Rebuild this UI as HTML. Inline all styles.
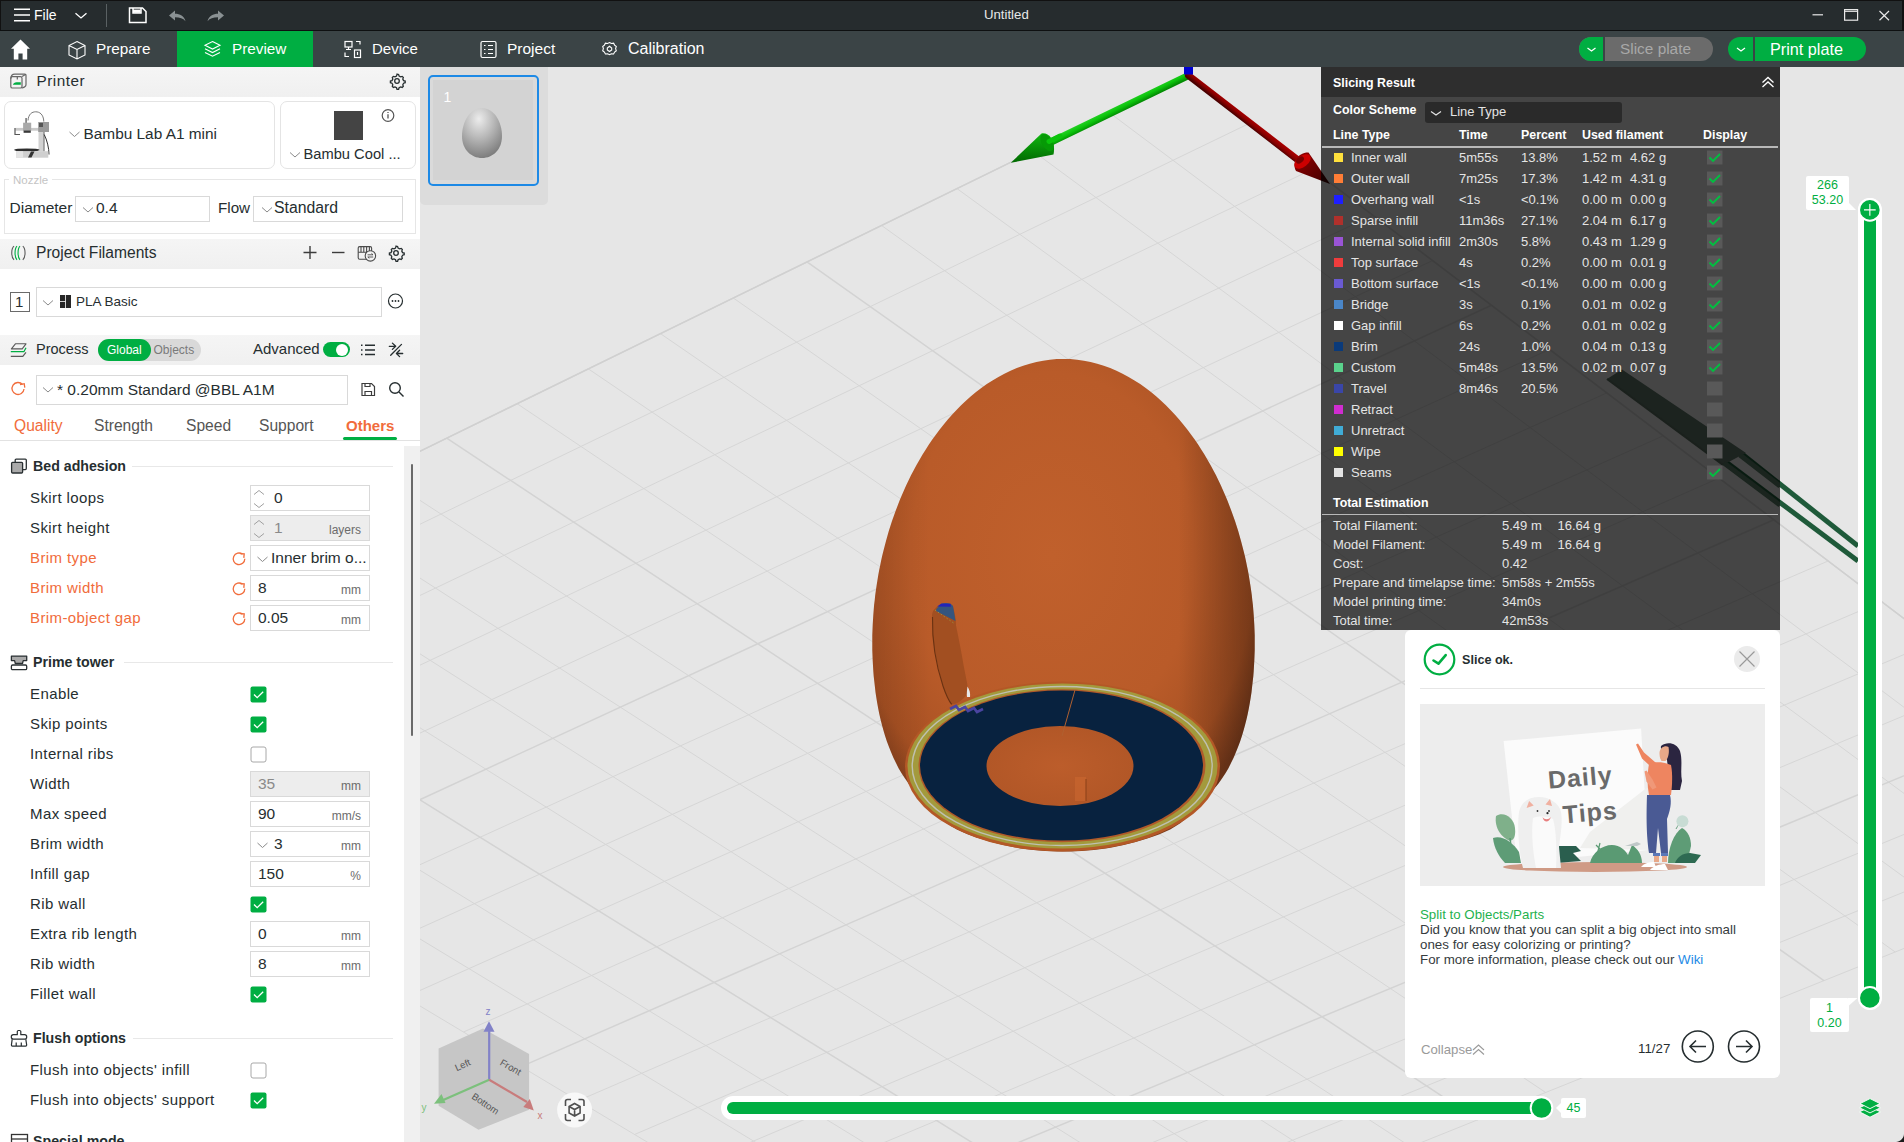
<!DOCTYPE html>
<html><head><meta charset="utf-8">
<style>
*{box-sizing:border-box;margin:0;padding:0}
html,body{width:1904px;height:1142px;overflow:hidden;background:#e6e6e6;font-family:"Liberation Sans",sans-serif;color:#262e30}
.a{position:absolute}
.t{position:absolute;white-space:nowrap;line-height:20px;height:20px}
#title{left:0;top:0;width:1904px;height:31px;background:#262c2e;border-top:1px solid #111;border-left:1px solid #111;border-right:2px solid #111;border-bottom:1px solid #0e1011}
#nav{left:0;top:31px;width:1904px;height:36px;background:#3b4446}
#left{left:0;top:67px;width:420px;height:1075px;background:#fff;overflow:hidden}
.hdr{position:absolute;left:0;width:404px;height:30px;background:linear-gradient(#f5f5f5,#f0f0f0)}
.inp{position:absolute;border:1px solid #d9d9d9;background:#fff}
.dis{background:#ededed}
.lbl{position:absolute;left:30px;font-size:15px;letter-spacing:0.4px;line-height:20px;height:20px;white-space:nowrap;color:#262e30}
.org{color:#f16c3b}
.unit{position:absolute;font-size:12px;color:#6b6b6b;line-height:14px}
.cb{position:absolute;left:250px;width:17px;height:17px;border-radius:2px;background:#00ae42}
.cbo{position:absolute;left:250px;width:17px;height:17px;border-radius:2px;border:1px solid #a6a6a6;background:#fff}
.sec{position:absolute;left:33px;font-size:14.2px;font-weight:bold;line-height:20px;height:20px;white-space:nowrap;color:#262e30}
.secl{position:absolute;height:1px;background:#e8e8e8}
</style></head><body>
<div id="title" class="a"></div>
<svg class="a" style="left:0;top:0" width="240" height="31">
 <g stroke="#fff" stroke-width="1.6"><path d="M14 9.2h16M14 15h16M14 20.8h16"/></g>
 <path d="M75.5 13.2l5.5 4.8 5.5-4.8" fill="none" stroke="#fff" stroke-width="1.3"/>
 <path d="M106.5 4v23" stroke="#5a6163" stroke-width="1"/>
 <g fill="none" stroke="#fff" stroke-width="1.5"><path d="M129.5 8h13l3.5 3.5v11h-16.5z"/><path d="M133 8v5h8V8"/></g>
 <path d="M133 9.6v3.2h7.6V9.6" fill="#fff"/>
 <path d="M169 15.5l6-5v3.2c5 0 9 2 10.5 7.5-2.5-3-5.5-4-10.5-4v3.3z" fill="#8a9193"/>
 <path d="M224 15.5l-6-5v3.2c-5 0-9 2-10.5 7.5 2.5-3 5.5-4 10.5-4v3.3z" fill="#8a9193"/>
</svg>
<div class="t" style="left:34px;top:5px;font-size:14px;color:#fff">File</div>
<div class="t" style="left:984px;top:5px;font-size:13.2px;color:#e8e8e8">Untitled</div>
<svg class="a" style="left:1800px;top:0" width="104" height="31">
 <g stroke="#e8e8e8" stroke-width="1.2" fill="none">
 <path d="M12.5 14.8h10.5"/><rect x="44.6" y="9.6" width="13" height="10.6"/><path d="M44.6 11.3h13"/>
 <path d="M79.5 11l9.5 9.2M89 11l-9.5 9.2"/></g>
</svg>
<div id="nav" class="a"></div>
<div class="a" style="left:177px;top:31px;width:136px;height:36px;background:#00ae42"></div>
<svg class="a" style="left:0;top:31px" width="720" height="36">
 <path d="M20.5 8.5l-9.5 9.2h2.8v10.8h4.6v-6h4.2v6h4.6V17.7h2.8z" fill="#fff"/>
 <g fill="none" stroke="#fff" stroke-width="1.1">
  <path d="M77 10.5l8 4v9.5l-8 4-8-4v-9.5z M69 14.5l8 4 8-4 M77 18.5v9.5"/>
 </g>
 <g fill="none" stroke="#fff" stroke-width="1.1">
  <path d="M212.5 10.5l7.5 3.8-7.5 3.8-7.5-3.8z"/><path d="M205 17.8l7.5 3.8 7.5-3.8"/><path d="M205 21.4l7.5 3.8 7.5-3.8"/>
 </g>
 <g fill="none" stroke="#fff" stroke-width="1.2">
  <rect x="345" y="10.5" width="7" height="5.5"/><path d="M348.5 16v2.5M346 18.5h5"/>
  <path d="M356 10.5h4v3M345 21.5v4h4"/><rect x="354.5" y="19" width="6" height="7.5"/><path d="M357.5 21v3"/>
 </g>
 <g fill="none" stroke="#fff" stroke-width="1.2">
  <rect x="481" y="10.5" width="15" height="16" rx="1.5"/><path d="M484 14.5h1.5M488 14.5h5M484 18.5h1.5M488 18.5h5M484 22.5h1.5M488 22.5h5"/>
 </g>
 <g fill="none" stroke="#fff" stroke-width="1.1">
  <path d="M609.5 11.5l1.9 1 2.2-.3 1 1.9 1.7 1.4-.7 2.1.7 2.1-1.7 1.4-1 1.9-2.2-.3-1.9 1-1.9-1-2.2.3-1-1.9-1.7-1.4.7-2.1-.7-2.1 1.7-1.4 1-1.9 2.2.3z"/>
  <path d="M609.5 15.3l2.2 1.8v1.9l-2.2 1.5-2.2-1.5v-1.9z"/>
 </g>
</svg>
<div class="t" style="left:96px;top:39px;font-size:15.3px;color:#fff">Prepare</div>
<div class="t" style="left:232px;top:39px;font-size:15.3px;color:#fff">Preview</div>
<div class="t" style="left:372px;top:39px;font-size:15px;color:#fff">Device</div>
<div class="t" style="left:507px;top:39px;font-size:15.5px;color:#fff">Project</div>
<div class="t" style="left:628px;top:39px;font-size:16px;color:#fff">Calibration</div>
<div class="a" style="left:1579px;top:37px;width:134px;height:24px;border-radius:12px;background:#6b6b6b;overflow:hidden">
 <div class="a" style="left:0;top:0;width:24px;height:24px;background:#00ae42"></div>
 <div class="a" style="left:24px;top:0;width:2px;height:24px;background:#3b4446"></div>
</div>
<div class="a" style="left:1728px;top:37px;width:138px;height:24px;border-radius:12px;background:#00ae42;overflow:hidden">
 <div class="a" style="left:25px;top:0;width:2px;height:24px;background:#3b4446"></div>
</div>
<svg class="a" style="left:1579px;top:37px" width="300" height="24">
 <path d="M8.5 11l4 3 4-3" fill="none" stroke="#fff" stroke-width="1.3"/>
 <path d="M158 11l4 3 4-3" fill="none" stroke="#fff" stroke-width="1.3"/>
</svg>
<div class="t" style="left:1620px;top:39px;font-size:15.4px;color:#a8a8a8">Slice plate</div>
<div class="t" style="left:1770px;top:39px;font-size:16.2px;color:#fff">Print plate</div>
<div id="left" class="a"></div>
<!-- printer header -->
<div class="hdr" style="top:67px;width:420px"></div>
<svg class="a" style="left:0;top:67px" width="420" height="30">
 <g fill="none" stroke="#666" stroke-width="1.2"><rect x="10.8" y="9.6" width="11.2" height="11.4" rx="1.6"/><path d="M10.8 11.8C10.9 8.6 12.4 7.1 14.8 7.1H24.6A1.4 1.4 0 0 1 26 8.5V17.6C26 19.2 24.8 20.4 22 21"/><path d="M22 9.6L26 7.3"/><path d="M17.3 9.6v3"/></g>
 <path d="M12.9 17.8C13.3 16.2 14.8 15.3 16.5 15.3H20.8V17.8Z" fill="#00ae42"/>
 <g fill="none" stroke="#262e30" stroke-width="1.3"><circle cx="397" cy="14" r="2.3"/>
 <path d="M397 7.2l1.6.3.5 1.6 1.5.8 1.6-.5 1.1 1.1-.5 1.6.8 1.5 1.6.5v1.6l-1.6.5-.8 1.5.5 1.6-1.1 1.1-1.6-.5-1.5.8-.5 1.6h-1.6l-.5-1.6-1.5-.8-1.6.5-1.1-1.1.5-1.6-.8-1.5-1.6-.5v-1.6l1.6-.5.8-1.5-.5-1.6 1.1-1.1 1.6.5 1.5-.8.5-1.6z"/></g>
</svg>
<div class="t" style="left:36.5px;top:71px;font-size:15.3px;letter-spacing:0.5px">Printer</div>
<!-- printer cards -->
<div class="a" style="left:4px;top:101px;width:271px;height:68px;border:1px solid #e4e4e4;border-radius:7px;background:#fff"></div>
<div class="a" style="left:280px;top:101px;width:136px;height:68px;border:1px solid #e4e4e4;border-radius:7px;background:#fff"></div>
<svg class="a" style="left:0;top:100px" width="420" height="70">
 <!-- printer image -->
 <path d="M28 20.5C28.5 14 32 11.8 35.7 11.8S43.5 14 43.8 21.6" fill="none" stroke="#6a6a6a" stroke-width="0.9"/>
 <rect x="25.2" y="18" width="1.8" height="5" fill="#888"/>
 <rect x="15.4" y="27.9" width="23.8" height="2.8" fill="#c9c9c9"/>
 <path d="M15 28v6.5h5" fill="none" stroke="#555" stroke-width="1.2"/>
 <rect x="23.1" y="22.7" width="8.1" height="8" fill="#a9a9a9"/>
 <rect x="23.6" y="30.5" width="7.2" height="2.3" fill="#3a3a3a"/>
 <rect x="38.2" y="22" width="10.8" height="10" fill="#9a9a9a"/>
 <rect x="39" y="23" width="4" height="4" fill="#555"/>
 <rect x="38.5" y="32" width="6" height="19.5" fill="#d2d2d2"/>
 <rect x="43.3" y="32" width="1.3" height="19.5" fill="#888"/>
 <path d="M44.2 34.5C47 40 49 48 49 54.5" fill="none" stroke="#333" stroke-width="1"/>
 <ellipse cx="26.8" cy="50" rx="12.6" ry="1.6" fill="#2e2e2e"/>
 <rect x="16.1" y="51.2" width="32.2" height="6.5" fill="#cfcfcf"/>
 <rect x="16.1" y="51.2" width="7" height="6.5" fill="#e4e4e4"/>
 <path d="M28 57.5l3-6h3.5l-3 6z" fill="#333"/>
 <path d="M69.5 32l5 4.5 5-4.5" fill="none" stroke="#8a8a8a" stroke-width="1"/>
 <!-- plate -->
 <rect x="334" y="11" width="29" height="29" fill="#444"/>
 <circle cx="388" cy="15.5" r="5.8" fill="none" stroke="#555" stroke-width="1.2"/>
 <path d="M388 14.3v4.2M388 11.9v1" stroke="#555" stroke-width="1.3"/>
 <path d="M290 52.5l5 4.5 5-4.5" fill="none" stroke="#8a8a8a" stroke-width="1"/>
</svg>
<div class="t" style="left:83.5px;top:124px;font-size:15.4px">Bambu Lab A1 mini</div>
<div class="t" style="left:303.5px;top:144px;font-size:14.7px">Bambu Cool ...</div>
<!-- nozzle -->
<div class="a" style="left:4px;top:179px;width:412px;height:55px;border:1px solid #e6e6e6"></div>
<div class="t" style="left:9px;top:170px;padding:0 4px;background:#fff;font-size:11.5px;color:#c4c4c4">Nozzle</div>
<div class="t" style="left:9.5px;top:198px;font-size:15.5px">Diameter</div>
<div class="inp" style="left:75px;top:196px;width:135px;height:26px"></div>
<div class="t" style="left:218px;top:198px;font-size:15.2px">Flow</div>
<div class="inp" style="left:253px;top:196px;width:150px;height:26px"></div>
<svg class="a" style="left:0;top:196px" width="420" height="26">
 <path d="M83 11.5l5 4.5 5-4.5M262 11.5l5 4.5 5-4.5" fill="none" stroke="#8a8a8a" stroke-width="1"/>
</svg>
<div class="t" style="left:96px;top:198px;font-size:15.5px">0.4</div>
<div class="t" style="left:274px;top:198px;font-size:15.8px">Standard</div>
<!-- project filaments -->
<div class="hdr" style="top:239px;width:420px"></div>
<svg class="a" style="left:0;top:239px" width="420" height="30">
 <g fill="none" stroke="#5a5a5a" stroke-width="1.1"><path d="M14 7.2c-3 2.5-3 11 0 13.6"/><path d="M22.8 7.2c3 2.5 3 11 0 13.6"/></g>
 <path d="M17 7.2c-2.6 2.5-2.6 11 0 13.6M20 7.2c-2.6 2.5-2.6 11 0 13.6" fill="none" stroke="#00ae42" stroke-width="1.1"/>
 <g stroke="#3c3c3c" stroke-width="1.4"><path d="M303.5 13.5h13M310 7v13"/><path d="M332 13.5h12.5"/></g>
 <g fill="none" stroke="#4a4a4a" stroke-width="1.1"><rect x="358.2" y="7.6" width="13.4" height="12.6" rx="1.5"/><path d="M358.2 13.3h13.4M361 7.6v5.7M363.8 7.6v5.7M366.6 7.6v5.7M369.4 7.6v5.7"/></g>
 <circle cx="370.4" cy="16.9" r="5.2" fill="#f3f3f3" stroke="#4a4a4a" stroke-width="1.1"/>
 <path d="M367.6 15.8h5.4l-1.5-1.4M373.2 18h-5.4l1.5 1.4" fill="none" stroke="#4a4a4a" stroke-width="0.9"/>
 <g fill="none" stroke="#262e30" stroke-width="1.3"><circle cx="396" cy="14" r="2.3"/>
 <path d="M396 7.2l1.6.3.5 1.6 1.5.8 1.6-.5 1.1 1.1-.5 1.6.8 1.5 1.6.5v1.6l-1.6.5-.8 1.5.5 1.6-1.1 1.1-1.6-.5-1.5.8-.5 1.6h-1.6l-.5-1.6-1.5-.8-1.6.5-1.1-1.1.5-1.6-.8-1.5-1.6-.5v-1.6l1.6-.5.8-1.5-.5-1.6 1.1-1.1 1.6.5 1.5-.8.5-1.6z"/></g>
</svg>
<div class="t" style="left:36px;top:243px;font-size:15.6px">Project Filaments</div>
<div class="a" style="left:10px;top:292px;width:20px;height:20px;border:1px solid #6a6a6a"></div>
<div class="t" style="left:15px;top:292px;font-size:15px">1</div>
<div class="inp" style="left:36px;top:287px;width:346px;height:30px"></div>
<svg class="a" style="left:0;top:287px" width="420" height="30">
 <path d="M43 13.5l5 4.5 5-4.5" fill="none" stroke="#8a8a8a" stroke-width="1"/>
 <rect x="60" y="8" width="11" height="13" fill="#262626"/>
 <path d="M65.5 8v13M60 14.5h5.5" stroke="#fff" stroke-width="0.8"/>
 <circle cx="395.5" cy="14" r="7" fill="none" stroke="#262e30" stroke-width="1.2"/>
 <g fill="#262e30"><circle cx="392.5" cy="14" r="0.9"/><circle cx="395.5" cy="14" r="0.9"/><circle cx="398.5" cy="14" r="0.9"/></g>
</svg>
<div class="t" style="left:76px;top:292px;font-size:13.5px">PLA Basic</div>
<!-- process -->
<div class="hdr" style="top:335px;width:420px"></div>
<svg class="a" style="left:0;top:335px" width="420" height="30">
 <path d="M15.4 8.8H26l-3.8 5.1H11.4z" fill="none" stroke="#5a5a5a" stroke-width="1.1" stroke-linejoin="round"/>
 <path d="M10.8 16.7h13.1l2.1-4" fill="none" stroke="#00ae42" stroke-width="1.3"/>
 <path d="M10.8 21.3h12l3.2-4" fill="none" stroke="#5a5a5a" stroke-width="1.2"/>
 <g stroke="#262e30" stroke-width="1.4"><path d="M365 10.2h10M365 15h10M365 19.5h10"/><path d="M361 10.2h1.5M361 15h1.5M361 19.5h1.5"/></g>
 <g fill="none" stroke="#262e30" stroke-width="1.3" stroke-linecap="round" stroke-linejoin="round"><path d="M401.5 9.4L390.7 20.2"/><path d="M389.3 11.3h6.4M392.4 8.1l3.3 3.2-3.3 3.1"/><path d="M402.7 18.5h-6.3M399.6 15.3l-3.2 3.2 3.2 3.1"/></g>
</svg>
<div class="t" style="left:36px;top:339px;font-size:14.5px">Process</div>
<div class="a" style="left:98px;top:339px;width:103px;height:22px;border-radius:11px;background:#d9d9d9"></div>
<div class="a" style="left:98px;top:339px;width:53px;height:22px;border-radius:11px;background:#00ae42"></div>
<div class="t" style="left:107px;top:340px;font-size:12px;color:#fff">Global</div>
<div class="t" style="left:153.5px;top:340px;font-size:12px;color:#7a7a7a">Objects</div>
<div class="t" style="left:253px;top:339px;font-size:15px">Advanced</div>
<div class="a" style="left:323px;top:342px;width:27px;height:15px;border-radius:8px;background:#00ae42"></div>
<div class="a" style="left:336px;top:343.5px;width:12px;height:12px;border-radius:6px;background:#fff"></div>
<!-- preset --><div class="inp" style="left:36px;top:375px;width:312px;height:30px"></div>

<svg class="a" style="left:0;top:375px" width="420" height="30">
 <path d="M22.5 9.5a6 6 0 1 0 1.5 4.5" fill="none" stroke="#f16c3b" stroke-width="1.3"/>
 <path d="M20 9.7l4.2-1 .6 4" fill="none" stroke="#f16c3b" stroke-width="1.3"/>
 <path d="M43 12.5l5 4.5 5-4.5" fill="none" stroke="#8a8a8a" stroke-width="1"/>
 <g fill="none" stroke="#3c3c3c" stroke-width="1.2"><path d="M362 8.5h9.5l3 3v9h-12.5z"/><path d="M365 20.5v-4h6.5v4M365 8.5v3h5v-3"/></g>
 <g fill="none" stroke="#262e30" stroke-width="1.4"><circle cx="395" cy="13" r="5.3"/><path d="M399 17l4.5 4.5"/></g>
</svg>
<div class="t" style="left:57px;top:379.5px;font-size:15.5px">* 0.20mm Standard @BBL A1M</div>
<!-- tabs -->
<div class="t" style="left:14px;top:416px;font-size:15.6px;color:#f16c3b">Quality</div>
<div class="t" style="left:94px;top:416px;font-size:15.6px;color:#555">Strength</div>
<div class="t" style="left:186px;top:416px;font-size:15.6px;color:#555">Speed</div>
<div class="t" style="left:259px;top:416px;font-size:15.6px;color:#555">Support</div>
<div class="t" style="left:346px;top:416px;font-size:15px;font-weight:bold;color:#f16c3b">Others</div>
<div class="a" style="left:343px;top:437px;width:54px;height:3px;border-radius:1.5px;background:#00ae42"></div>
<div class="a" style="left:0;top:440px;width:420px;height:1px;background:#e2e2e2"></div>
<!-- scrollbar -->
<div class="a" style="left:404px;top:446px;width:16px;height:696px;background:#f0f0f0"></div>
<div class="a" style="left:410.5px;top:464px;width:2.5px;height:272px;border-radius:1px;background:#6a6a6a"></div>
<div class="sec" style="top:456px">Bed adhesion</div>
<svg class="a" style="left:10px;top:457px" width="20" height="20"><g stroke="#2a3033" stroke-width="1.3" stroke-linejoin="round"><rect x="5.2" y="2.1" width="11.1" height="10.5" rx="1" fill="#fff"/><rect x="1.6" y="5.3" width="11" height="10.7" rx="1" fill="#aaa"/></g></svg>
<div class="secl" style="left:132px;top:466px;width:261px"></div>
<div class="lbl" style="top:487.5px">Skirt loops</div>
<div class="inp" style="left:250px;top:485.0px;width:120px;height:26px"></div>
<svg class="a" style="left:250px;top:485.5px" width="20" height="26"><path d="M4 8.5l5-4 5 4M4 17.5l5 4 5-4" fill="none" stroke="#a0a0a0" stroke-width="1"/></svg>
<div class="t" style="left:274px;top:487.5px;font-size:15.5px;color:#262e30">0</div>
<div class="lbl" style="top:517.5px">Skirt height</div>
<div class="inp dis" style="left:250px;top:515.0px;width:120px;height:26px"></div>
<svg class="a" style="left:250px;top:515.5px" width="20" height="26"><path d="M4 8.5l5-4 5 4M4 17.5l5 4 5-4" fill="none" stroke="#a0a0a0" stroke-width="1"/></svg>
<div class="t" style="left:274px;top:517.5px;font-size:15.5px;color:#8a8a8a">1</div>
<div class="t" style="right:1543px;top:519.5px;font-size:12px;color:#6b6b6b">layers</div>
<div class="lbl org" style="top:547.5px">Brim type</div>
<svg class="a" style="left:230px;top:548.5px" width="18" height="18"><path d="M12.5 5.2a5.8 5.8 0 1 0 2.3 4.6" fill="none" stroke="#f16c3b" stroke-width="1.3"/><path d="M10.2 4.7l4 .2-.4 4" fill="none" stroke="#f16c3b" stroke-width="1.3"/></svg>
<div class="inp" style="left:250px;top:545.0px;width:120px;height:26px"></div>
<svg class="a" style="left:250px;top:545.5px" width="20" height="26"><path d="M7.5 11l5 4.5 5-4.5" fill="none" stroke="#8a8a8a" stroke-width="1"/></svg>
<div class="t" style="left:271px;top:547.5px;font-size:15.5px;color:#262e30">Inner brim o...</div>
<div class="lbl org" style="top:577.5px">Brim width</div>
<svg class="a" style="left:230px;top:578.5px" width="18" height="18"><path d="M12.5 5.2a5.8 5.8 0 1 0 2.3 4.6" fill="none" stroke="#f16c3b" stroke-width="1.3"/><path d="M10.2 4.7l4 .2-.4 4" fill="none" stroke="#f16c3b" stroke-width="1.3"/></svg>
<div class="inp" style="left:250px;top:575.0px;width:120px;height:26px"></div>
<div class="t" style="left:258px;top:577.5px;font-size:15.5px;color:#262e30">8</div>
<div class="t" style="right:1543px;top:579.5px;font-size:12px;color:#6b6b6b">mm</div>
<div class="lbl org" style="top:607.5px">Brim-object gap</div>
<svg class="a" style="left:230px;top:608.5px" width="18" height="18"><path d="M12.5 5.2a5.8 5.8 0 1 0 2.3 4.6" fill="none" stroke="#f16c3b" stroke-width="1.3"/><path d="M10.2 4.7l4 .2-.4 4" fill="none" stroke="#f16c3b" stroke-width="1.3"/></svg>
<div class="inp" style="left:250px;top:605.0px;width:120px;height:26px"></div>
<div class="t" style="left:258px;top:607.5px;font-size:15.5px;color:#262e30">0.05</div>
<div class="t" style="right:1543px;top:609.5px;font-size:12px;color:#6b6b6b">mm</div>
<div class="sec" style="top:651.5px">Prime tower</div>
<svg class="a" style="left:10px;top:652.5px" width="20" height="20"><g stroke="#2a3033" stroke-width="1.3" stroke-linejoin="round"><path d="M1.4 3.1H16.7V7.6H13.2L12.5 10.5H5.3L4.6 7.6H1.4Z" fill="#aaa"/><rect x="1.4" y="12" width="15.3" height="4.6" rx="1.2" fill="#fff"/></g></svg>
<div class="secl" style="left:124px;top:662px;width:269px"></div>
<div class="lbl" style="top:683.5px">Enable</div>
<svg class="a" style="left:250px;top:685.5px" width="17" height="17"><rect x="0.5" y="0.5" width="16" height="16" rx="2" fill="#00ae42"/><path d="M4 8.5l3.2 3.2 6-6" fill="none" stroke="#fff" stroke-width="1.3"/></svg>
<div class="lbl" style="top:713.5px">Skip points</div>
<svg class="a" style="left:250px;top:715.5px" width="17" height="17"><rect x="0.5" y="0.5" width="16" height="16" rx="2" fill="#00ae42"/><path d="M4 8.5l3.2 3.2 6-6" fill="none" stroke="#fff" stroke-width="1.3"/></svg>
<div class="lbl" style="top:743.5px">Internal ribs</div>
<svg class="a" style="left:250px;top:745.5px" width="17" height="17"><rect x="1" y="1" width="15" height="15" rx="2" fill="#fff" stroke="#a8a8a8" stroke-width="1"/></svg>
<div class="lbl" style="top:773.5px">Width</div>
<div class="inp dis" style="left:250px;top:771.0px;width:120px;height:26px"></div>
<div class="t" style="left:258px;top:773.5px;font-size:15.5px;color:#8a8a8a">35</div>
<div class="t" style="right:1543px;top:775.5px;font-size:12px;color:#6b6b6b">mm</div>
<div class="lbl" style="top:803.5px">Max speed</div>
<div class="inp" style="left:250px;top:801.0px;width:120px;height:26px"></div>
<div class="t" style="left:258px;top:803.5px;font-size:15.5px;color:#262e30">90</div>
<div class="t" style="right:1543px;top:805.5px;font-size:12px;color:#6b6b6b">mm/s</div>
<div class="lbl" style="top:833.5px">Brim width</div>
<div class="inp" style="left:250px;top:831.0px;width:120px;height:26px"></div>
<svg class="a" style="left:250px;top:831.5px" width="20" height="26"><path d="M7.5 11l5 4.5 5-4.5" fill="none" stroke="#8a8a8a" stroke-width="1"/></svg>
<div class="t" style="left:274px;top:833.5px;font-size:15.5px;color:#262e30">3</div>
<div class="t" style="right:1543px;top:835.5px;font-size:12px;color:#6b6b6b">mm</div>
<div class="lbl" style="top:863.5px">Infill gap</div>
<div class="inp" style="left:250px;top:861.0px;width:120px;height:26px"></div>
<div class="t" style="left:258px;top:863.5px;font-size:15.5px;color:#262e30">150</div>
<div class="t" style="right:1543px;top:865.5px;font-size:12px;color:#6b6b6b">%</div>
<div class="lbl" style="top:893.5px">Rib wall</div>
<svg class="a" style="left:250px;top:895.5px" width="17" height="17"><rect x="0.5" y="0.5" width="16" height="16" rx="2" fill="#00ae42"/><path d="M4 8.5l3.2 3.2 6-6" fill="none" stroke="#fff" stroke-width="1.3"/></svg>
<div class="lbl" style="top:923.5px">Extra rib length</div>
<div class="inp" style="left:250px;top:921.0px;width:120px;height:26px"></div>
<div class="t" style="left:258px;top:923.5px;font-size:15.5px;color:#262e30">0</div>
<div class="t" style="right:1543px;top:925.5px;font-size:12px;color:#6b6b6b">mm</div>
<div class="lbl" style="top:953.5px">Rib width</div>
<div class="inp" style="left:250px;top:951.0px;width:120px;height:26px"></div>
<div class="t" style="left:258px;top:953.5px;font-size:15.5px;color:#262e30">8</div>
<div class="t" style="right:1543px;top:955.5px;font-size:12px;color:#6b6b6b">mm</div>
<div class="lbl" style="top:983.5px">Fillet wall</div>
<svg class="a" style="left:250px;top:985.5px" width="17" height="17"><rect x="0.5" y="0.5" width="16" height="16" rx="2" fill="#00ae42"/><path d="M4 8.5l3.2 3.2 6-6" fill="none" stroke="#fff" stroke-width="1.3"/></svg>
<div class="sec" style="top:1027.5px">Flush options</div>
<svg class="a" style="left:10px;top:1027.5px" width="20" height="20"><g fill="none" stroke="#2a3033" stroke-width="1.2" stroke-linejoin="round"><path d="M7.3 6.7V3.6A1.1 1.1 0 0 1 8.4 2.5H9.7A1.1 1.1 0 0 1 10.8 3.6V6.7H14.6A2.1 2.1 0 0 1 16.7 8.8V9A2.1 2.1 0 0 1 14.6 11.1H3.4A2.1 2.1 0 0 1 1.3 9V8.8A2.1 2.1 0 0 1 3.4 6.7Z"/><path d="M2.2 11.1L1.4 17.1A1 1 0 0 0 2.4 18.1H15.7A1 1 0 0 0 16.7 17.1L15.8 11.1"/><path d="M6.2 14.4V18M11.3 14.4V18"/></g></svg>
<div class="secl" style="left:133px;top:1038px;width:260px"></div>
<div class="lbl" style="top:1059.5px">Flush into objects' infill</div>
<svg class="a" style="left:250px;top:1061.5px" width="17" height="17"><rect x="1" y="1" width="15" height="15" rx="2" fill="#fff" stroke="#a8a8a8" stroke-width="1"/></svg>
<div class="lbl" style="top:1089.5px">Flush into objects' support</div>
<svg class="a" style="left:250px;top:1091.5px" width="17" height="17"><rect x="0.5" y="0.5" width="16" height="16" rx="2" fill="#00ae42"/><path d="M4 8.5l3.2 3.2 6-6" fill="none" stroke="#fff" stroke-width="1.3"/></svg>
<div class="sec" style="top:1131px">Special mode</div>
<svg class="a" style="left:10px;top:1133px" width="20" height="20"><rect x="1.5" y="1.5" width="16" height="14" fill="none" stroke="#333" stroke-width="1.3"/><path d="M1.5 6h16" stroke="#333" stroke-width="1.3"/></svg><svg class="a" style="left:420px;top:67px" width="1484" height="1075" viewBox="420 67 1484 1075">
<path d="M1251.0 122.6L-25.2 739.4M1110.5 113.5L2113.7 864.2M1312.4 169.3L38.6 777.6M1033.3 151.3L2040.1 893.8M1372.9 215.3L101.7 815.4M957.0 188.6L1967.3 923.1M1432.6 260.6L163.9 852.6M881.6 225.5L1895.2 952.0M1549.6 349.4L286.0 925.8M733.3 298.0L1753.3 1009.1M1606.8 392.9L345.9 961.6M660.4 333.6L1683.4 1037.2M1663.3 435.8L405.1 997.1M588.4 368.9L1614.2 1065.0M1719.0 478.1L463.5 1032.0M517.1 403.7L1545.7 1092.5M1828.1 561.0L578.2 1100.7M377.0 472.3L1410.7 1146.8M1881.6 601.6L634.5 1134.5M308.1 506.0L1344.2 1173.5M1934.3 641.7L690.2 1167.8M239.9 539.3L1278.4 1199.9M1986.4 681.2L745.1 1200.7M172.5 572.3L1213.1 1226.1M2088.5 758.8L853.1 1265.3M39.9 637.2L1084.6 1277.8M2138.6 796.8L906.1 1297.1M-25.4 669.1L1021.3 1303.3M2188.0 834.3L958.5 1328.5M-89.9 700.6L958.5 1328.5" stroke="#d6d6d6" stroke-width="1" fill="none"/>
<path d="M1188.6 75.3L-89.9 700.6M1188.6 75.3L2188.0 834.3M1491.5 305.3L225.4 889.4M807.0 261.9L1823.9 980.7M1773.9 519.8L521.2 1066.6M446.7 438.2L1477.9 1119.8M2037.8 720.3L799.4 1233.2M105.8 604.9L1148.6 1252.1" stroke="#d3d3d3" stroke-width="1.5" fill="none"/>
<path d="M-89.9 700.6L1188.6 75.3L2188.0 834.3" stroke="#d0d0d0" stroke-width="1.3" fill="none"/><defs>
 <radialGradient id="eg" cx="0.47" cy="0.40" r="0.62">
  <stop offset="0" stop-color="#c0602c"/><stop offset="0.6" stop-color="#b95b29"/><stop offset="0.86" stop-color="#a85123"/><stop offset="1" stop-color="#7c3c1c"/>
 </radialGradient>
 <linearGradient id="egr" x1="0" y1="0" x2="1" y2="0">
  <stop offset="0" stop-color="#000" stop-opacity="0.10"/><stop offset="0.15" stop-color="#000" stop-opacity="0"/><stop offset="0.80" stop-color="#000" stop-opacity="0"/><stop offset="1" stop-color="#000" stop-opacity="0.30"/>
 </linearGradient>
 <radialGradient id="hole" cx="0.5" cy="0.5" r="0.5">
  <stop offset="0" stop-color="#bc5d2b"/><stop offset="1" stop-color="#b25727"/>
 </radialGradient>
</defs>
<g>
<path d="M1063.5 358.9 L1070.3 359.1 L1077.1 359.7 L1083.9 360.7 L1090.6 362.0 L1097.2 363.7 L1103.8 365.7 L1110.2 368.1 L1116.5 370.7 L1122.6 373.7 L1128.6 376.9 L1134.5 380.4 L1140.2 384.1 L1145.7 388.0 L1151.0 392.1 L1156.1 396.3 L1161.1 400.7 L1165.9 405.3 L1170.5 409.9 L1175.0 414.7 L1179.2 419.5 L1183.3 424.4 L1187.3 429.4 L1191.0 434.4 L1194.7 439.5 L1198.1 444.6 L1201.4 449.7 L1204.6 454.8 L1207.6 459.9 L1210.5 465.1 L1213.3 470.2 L1216.0 475.3 L1218.5 480.4 L1220.9 485.6 L1223.2 490.7 L1225.4 495.8 L1227.5 500.8 L1229.5 505.9 L1231.4 511.0 L1233.2 516.0 L1235.0 521.0 L1236.6 526.0 L1238.2 531.0 L1239.6 536.0 L1241.0 541.0 L1242.3 545.9 L1243.6 550.9 L1244.8 555.8 L1245.9 560.7 L1246.9 565.7 L1247.9 570.6 L1248.8 575.5 L1249.6 580.4 L1250.4 585.4 L1251.1 590.3 L1251.8 595.2 L1252.3 600.2 L1252.9 605.1 L1253.3 610.1 L1253.7 615.0 L1254.0 620.0 L1254.3 625.0 L1254.5 630.0 L1254.7 635.0 L1254.7 640.1 L1254.7 645.2 L1254.7 650.3 L1254.5 655.4 L1254.3 660.6 L1254.0 665.7 L1253.7 671.0 L1253.3 676.2 L1252.7 681.5 L1252.1 686.8 L1251.5 692.2 L1250.7 697.5 L1249.8 703.0 L1248.8 708.4 L1247.7 713.9 L1246.5 719.3 L1245.1 724.8 L1243.6 730.3 L1241.9 735.9 L1240.1 741.4 L1238.1 746.8 L1235.9 752.3 L1233.6 757.7 L1231.0 763.1 L1228.3 768.4 L1225.3 773.5 L1222.0 778.5 L1218.5 783.4 L1214.8 788.0 L1210.9 792.5 L1206.7 796.9 L1202.5 801.2 L1198.3 805.6 L1194.1 810.0 L1189.8 814.5 L1185.4 818.9 L1180.6 822.9 L1175.5 826.3 L1170.2 829.4 L1164.6 832.0 L1158.9 834.4 L1153.2 836.4 L1147.3 838.4 L1141.5 840.2 L1135.6 841.9 L1129.7 843.5 L1123.8 844.9 L1117.8 846.2 L1111.8 847.4 L1105.8 848.4 L1099.8 849.2 L1093.8 850.0 L1087.7 850.5 L1081.7 851.0 L1075.6 851.3 L1069.6 851.4 L1063.5 851.5 L1057.4 851.4 L1051.4 851.3 L1045.3 851.0 L1039.3 850.5 L1033.2 850.0 L1027.2 849.2 L1021.2 848.4 L1015.2 847.4 L1009.2 846.2 L1003.2 844.9 L997.3 843.5 L991.4 841.9 L985.5 840.2 L979.7 838.4 L973.8 836.4 L968.1 834.4 L962.4 832.0 L956.8 829.4 L951.5 826.3 L946.4 822.9 L941.6 818.9 L937.2 814.5 L932.9 810.0 L928.7 805.6 L924.5 801.2 L920.3 796.9 L916.1 792.5 L912.2 788.0 L908.5 783.4 L905.0 778.5 L901.7 773.5 L898.7 768.4 L896.0 763.1 L893.4 757.7 L891.1 752.3 L888.9 746.8 L886.9 741.4 L885.1 735.9 L883.4 730.3 L881.9 724.8 L880.5 719.3 L879.3 713.9 L878.2 708.4 L877.2 703.0 L876.3 697.5 L875.5 692.2 L874.9 686.8 L874.3 681.5 L873.7 676.2 L873.3 671.0 L873.0 665.7 L872.7 660.6 L872.5 655.4 L872.3 650.3 L872.3 645.2 L872.3 640.1 L872.3 635.0 L872.5 630.0 L872.7 625.0 L873.0 620.0 L873.3 615.0 L873.7 610.1 L874.1 605.1 L874.7 600.2 L875.2 595.2 L875.9 590.3 L876.6 585.4 L877.4 580.4 L878.2 575.5 L879.1 570.6 L880.1 565.7 L881.1 560.7 L882.2 555.8 L883.4 550.9 L884.7 545.9 L886.0 541.0 L887.4 536.0 L888.8 531.0 L890.4 526.0 L892.0 521.0 L893.8 516.0 L895.6 511.0 L897.5 505.9 L899.5 500.8 L901.6 495.8 L903.8 490.7 L906.1 485.6 L908.5 480.4 L911.0 475.3 L913.7 470.2 L916.5 465.1 L919.4 459.9 L922.4 454.8 L925.6 449.7 L928.9 444.6 L932.3 439.5 L936.0 434.4 L939.7 429.4 L943.7 424.4 L947.8 419.5 L952.0 414.7 L956.5 409.9 L961.1 405.3 L965.9 400.7 L970.9 396.3 L976.0 392.1 L981.3 388.0 L986.8 384.1 L992.5 380.4 L998.4 376.9 L1004.4 373.7 L1010.5 370.7 L1016.8 368.1 L1023.2 365.7 L1029.8 363.7 L1036.4 362.0 L1043.1 360.7 L1049.9 359.7 L1056.7 359.1Z" fill="url(#eg)"/>
<path d="M1063.5 358.9 L1070.3 359.1 L1077.1 359.7 L1083.9 360.7 L1090.6 362.0 L1097.2 363.7 L1103.8 365.7 L1110.2 368.1 L1116.5 370.7 L1122.6 373.7 L1128.6 376.9 L1134.5 380.4 L1140.2 384.1 L1145.7 388.0 L1151.0 392.1 L1156.1 396.3 L1161.1 400.7 L1165.9 405.3 L1170.5 409.9 L1175.0 414.7 L1179.2 419.5 L1183.3 424.4 L1187.3 429.4 L1191.0 434.4 L1194.7 439.5 L1198.1 444.6 L1201.4 449.7 L1204.6 454.8 L1207.6 459.9 L1210.5 465.1 L1213.3 470.2 L1216.0 475.3 L1218.5 480.4 L1220.9 485.6 L1223.2 490.7 L1225.4 495.8 L1227.5 500.8 L1229.5 505.9 L1231.4 511.0 L1233.2 516.0 L1235.0 521.0 L1236.6 526.0 L1238.2 531.0 L1239.6 536.0 L1241.0 541.0 L1242.3 545.9 L1243.6 550.9 L1244.8 555.8 L1245.9 560.7 L1246.9 565.7 L1247.9 570.6 L1248.8 575.5 L1249.6 580.4 L1250.4 585.4 L1251.1 590.3 L1251.8 595.2 L1252.3 600.2 L1252.9 605.1 L1253.3 610.1 L1253.7 615.0 L1254.0 620.0 L1254.3 625.0 L1254.5 630.0 L1254.7 635.0 L1254.7 640.1 L1254.7 645.2 L1254.7 650.3 L1254.5 655.4 L1254.3 660.6 L1254.0 665.7 L1253.7 671.0 L1253.3 676.2 L1252.7 681.5 L1252.1 686.8 L1251.5 692.2 L1250.7 697.5 L1249.8 703.0 L1248.8 708.4 L1247.7 713.9 L1246.5 719.3 L1245.1 724.8 L1243.6 730.3 L1241.9 735.9 L1240.1 741.4 L1238.1 746.8 L1235.9 752.3 L1233.6 757.7 L1231.0 763.1 L1228.3 768.4 L1225.3 773.5 L1222.0 778.5 L1218.5 783.4 L1214.8 788.0 L1210.9 792.5 L1206.7 796.9 L1202.5 801.2 L1198.3 805.6 L1194.1 810.0 L1189.8 814.5 L1185.4 818.9 L1180.6 822.9 L1175.5 826.3 L1170.2 829.4 L1164.6 832.0 L1158.9 834.4 L1153.2 836.4 L1147.3 838.4 L1141.5 840.2 L1135.6 841.9 L1129.7 843.5 L1123.8 844.9 L1117.8 846.2 L1111.8 847.4 L1105.8 848.4 L1099.8 849.2 L1093.8 850.0 L1087.7 850.5 L1081.7 851.0 L1075.6 851.3 L1069.6 851.4 L1063.5 851.5 L1057.4 851.4 L1051.4 851.3 L1045.3 851.0 L1039.3 850.5 L1033.2 850.0 L1027.2 849.2 L1021.2 848.4 L1015.2 847.4 L1009.2 846.2 L1003.2 844.9 L997.3 843.5 L991.4 841.9 L985.5 840.2 L979.7 838.4 L973.8 836.4 L968.1 834.4 L962.4 832.0 L956.8 829.4 L951.5 826.3 L946.4 822.9 L941.6 818.9 L937.2 814.5 L932.9 810.0 L928.7 805.6 L924.5 801.2 L920.3 796.9 L916.1 792.5 L912.2 788.0 L908.5 783.4 L905.0 778.5 L901.7 773.5 L898.7 768.4 L896.0 763.1 L893.4 757.7 L891.1 752.3 L888.9 746.8 L886.9 741.4 L885.1 735.9 L883.4 730.3 L881.9 724.8 L880.5 719.3 L879.3 713.9 L878.2 708.4 L877.2 703.0 L876.3 697.5 L875.5 692.2 L874.9 686.8 L874.3 681.5 L873.7 676.2 L873.3 671.0 L873.0 665.7 L872.7 660.6 L872.5 655.4 L872.3 650.3 L872.3 645.2 L872.3 640.1 L872.3 635.0 L872.5 630.0 L872.7 625.0 L873.0 620.0 L873.3 615.0 L873.7 610.1 L874.1 605.1 L874.7 600.2 L875.2 595.2 L875.9 590.3 L876.6 585.4 L877.4 580.4 L878.2 575.5 L879.1 570.6 L880.1 565.7 L881.1 560.7 L882.2 555.8 L883.4 550.9 L884.7 545.9 L886.0 541.0 L887.4 536.0 L888.8 531.0 L890.4 526.0 L892.0 521.0 L893.8 516.0 L895.6 511.0 L897.5 505.9 L899.5 500.8 L901.6 495.8 L903.8 490.7 L906.1 485.6 L908.5 480.4 L911.0 475.3 L913.7 470.2 L916.5 465.1 L919.4 459.9 L922.4 454.8 L925.6 449.7 L928.9 444.6 L932.3 439.5 L936.0 434.4 L939.7 429.4 L943.7 424.4 L947.8 419.5 L952.0 414.7 L956.5 409.9 L961.1 405.3 L965.9 400.7 L970.9 396.3 L976.0 392.1 L981.3 388.0 L986.8 384.1 L992.5 380.4 L998.4 376.9 L1004.4 373.7 L1010.5 370.7 L1016.8 368.1 L1023.2 365.7 L1029.8 363.7 L1036.4 362.0 L1043.1 360.7 L1049.9 359.7 L1056.7 359.1Z" fill="url(#egr)"/>
</g>
<ellipse cx="1062.5" cy="766.5" rx="157.5" ry="85" fill="#b35826"/>
<ellipse cx="1062.5" cy="766" rx="155" ry="82.5" fill="#a39a3c"/>
<ellipse cx="1062.2" cy="766" rx="150" ry="79.5" fill="none" stroke="#bfc0b0" stroke-width="1.4"/>
<ellipse cx="1062" cy="765.8" rx="143.5" ry="76.5" fill="#b05a2a"/>
<ellipse cx="1061.5" cy="765.6" rx="141.5" ry="75" fill="#08223f"/>
<ellipse cx="1060" cy="766" rx="73.5" ry="40" fill="url(#hole)"/>
<path d="M1075 690L1062 736" stroke="#b06030" stroke-width="1" fill="none"/>
<path d="M1075 777h11v24h-11z" fill="#c8652f" opacity="0.7"/><path d="M1086 779v22" stroke="#8a4018" stroke-width="1"/>
<path d="M932 616.9C932 611 934 610 936 607.5C942 603 950 603 953 607C955 613 956 620 956 625.6C959 640 962 655 963.7 666C966 678 968 686 968 691.2C966 698 958 704 951.7 704.4C946 695 943 688 941.9 682.5C938 665 934 650 933.1 638.7C932.5 630 932 622 932 616.9Z" fill="#a24f21"/>
<path d="M932.5 617C932 640 936 665 943 686C946 695 949 701 951.7 704.4" fill="none" stroke="#6a3212" stroke-width="1.1"/>
<path d="M936.4 609L941 604C946 602 951 603 953 606L955.5 621L936 611z" fill="#35557e"/>
<path d="M937 606.5l4.5-3 9 .2.5 3z" fill="#2424b8"/>
<path d="M935 610l20 14" stroke="#9a9a40" stroke-width="0.8" stroke-dasharray="1.5 2"/>
<path d="M967.5 686.5c2 3 3 7 2.5 10.5h-3c-.5-3 0-7 .5-10.5z" fill="#e8e8e8"/>
<path d="M950 709l6-3 3 4 6-3 3 4 6-3 3 4 6-3" fill="none" stroke="#4a44a0" stroke-width="2.6"/>
<!-- 3D axes -->
<defs>
 <linearGradient id="gsh" gradientUnits="userSpaceOnUse" x1="1117.3" y1="105.6" x2="1120.7" y2="112.4"><stop offset="0" stop-color="#22d022"/><stop offset="0.45" stop-color="#0cc40c"/><stop offset="1" stop-color="#028a02"/></linearGradient>
 <linearGradient id="rsh" gradientUnits="userSpaceOnUse" x1="1247.2" y1="116" x2="1242.8" y2="121.5"><stop offset="0" stop-color="#a80000"/><stop offset="0.5" stop-color="#8a0000"/><stop offset="1" stop-color="#4a0000"/></linearGradient>
 <linearGradient id="gcone" x1="0" y1="0" x2="0" y2="1"><stop offset="0" stop-color="#10b810"/><stop offset="1" stop-color="#006800"/></linearGradient>
 <linearGradient id="rcone" x1="0" y1="0" x2="1" y2="1"><stop offset="0" stop-color="#9a0000"/><stop offset="1" stop-color="#3a0000"/></linearGradient>
</defs>
<path d="M1188.5 75.5L1048 143.5" stroke="url(#gsh)" stroke-width="7" stroke-linecap="round"/>
<path d="M1010.8 162.8L1041.5 133.5C1050 132 1056 142 1053.5 154.5z" fill="url(#gcone)"/>
<ellipse cx="1047" cy="142.5" rx="5.2" ry="9.5" transform="rotate(-32 1047 142.5)" fill="#069a06"/>
<path d="M1049 141.5L1060 136" stroke="#0cc40c" stroke-width="5" stroke-linecap="round"/>
<path d="M1188.5 75.5L1298 160" stroke="url(#rsh)" stroke-width="7" stroke-linecap="round"/>
<path d="M1330 184L1296 171C1291 162 1299 152 1308.5 152.5z" fill="url(#rcone)"/>
<ellipse cx="1302.5" cy="161.5" rx="5.5" ry="9.5" transform="rotate(52 1302.5 161.5)" fill="#cc0000"/>
<ellipse cx="1300" cy="160" rx="2.8" ry="4.5" transform="rotate(52 1300 160)" fill="#7a0000"/>
<rect x="1184" y="67" width="9" height="7.5" fill="#0000d0"/>
<!-- green lines at right -->
<path d="M1742 454L1858 546" stroke="#1f5a3a" stroke-width="5"/>
<path d="M1726 462L1858 561" stroke="#1f5a3a" stroke-width="5"/>
<!-- nav cube -->
<path d="M483 1028.6L438.6 1048.5V1105.8L478.5 1129.7L529.1 1109.8V1053.9Z" fill="#c6c6c6"/>
<path d="M489.2 1079.8V1030" stroke="#8282c8" stroke-width="2.2"/>
<path d="M489 1021.3l-5.5 10.5h11z" fill="#8282c8"/>
<path d="M489.2 1079.8L441 1101" stroke="#7cc07c" stroke-width="2.2"/>
<path d="M434 1103.8l11.5-.8-4-9z" fill="#7cc07c"/>
<path d="M489.2 1079.8L527 1102" stroke="#c87c7c" stroke-width="2.2"/>
<path d="M533.8 1110.4l-4-11.5-6.5 8z" fill="#c87c7c"/>
<text x="488" y="1015" font-size="10" fill="#8282c8" text-anchor="middle" font-family="Liberation Sans">z</text>
<text x="424" y="1111" font-size="10" fill="#7cc07c" text-anchor="middle" font-family="Liberation Sans">y</text>
<text x="540" y="1119" font-size="10" fill="#c87c7c" text-anchor="middle" font-family="Liberation Sans">x</text>
<text x="464" y="1068" font-size="9.6" fill="#555" text-anchor="middle" transform="rotate(-24 464 1068)" font-family="Liberation Sans">Left</text>
<text x="509" y="1070" font-size="9.6" fill="#555" text-anchor="middle" transform="rotate(30 509 1070)" font-family="Liberation Sans">Front</text>
<text x="483.5" y="1106.5" font-size="9.6" fill="#555" text-anchor="middle" transform="rotate(34 483.5 1106.5)" font-family="Liberation Sans">Bottom</text>
<circle cx="574.6" cy="1110" r="17.5" fill="#f8f8f8"/>
<g fill="none" stroke="#505050" stroke-width="1.6">
 <path d="M565.5 1106v-4.5a2 2 0 0 1 2-2h3.5M578.5 1099.5h3.5a2 2 0 0 1 2 2v4.5M565.5 1114v4.5a2 2 0 0 0 2 2h3.5M578.5 1120.5h3.5a2 2 0 0 0 2-2v-4.5"/>
 <path d="M574.6 1103.5l5.5 3v6.5l-5.5 3-5.5-3v-6.5z M569.1 1106.5l5.5 3 5.5-3 M574.6 1109.5v6.5"/>
</g>
</svg>
<!-- thumbnail -->
<div class="a" style="left:420px;top:67px;width:128px;height:137.5px;background:#dcdcdc;border-radius:0 0 5px 5px"></div>
<div class="a" style="left:427.5px;top:74.5px;width:111px;height:111px;border:2px solid #1e8ae6;border-radius:5px;background:#dadada"></div>
<div class="a" style="left:433px;top:80px;width:100px;height:100px;background:#d3d3d3"></div>
<div class="t" style="left:443.5px;top:87px;font-size:14px;color:#fff">1</div>
<svg class="a" style="left:450px;top:100px" width="70" height="70" viewBox="450 100 70 70">
 <defs><radialGradient id="tg" cx="0.42" cy="0.22" r="0.85"><stop offset="0" stop-color="#ececec"/><stop offset="0.45" stop-color="#b8b8b8"/><stop offset="1" stop-color="#747474"/></radialGradient></defs>
 <path d="M482 108C494 108 502 122 502 136C502 149.5 493 158 482 158C471 158 462 149.5 462 136C462 122 470 108 482 108Z" fill="url(#tg)"/>
</svg>
<!-- vertical slider -->
<div class="a" style="left:1858px;top:198px;width:24px;height:812px;border-radius:12px;background:#fff"></div>
<div class="a" style="left:1864px;top:210px;width:12px;height:780px;background:#00ae42"></div>
<svg class="a" style="left:1855px;top:195px" width="30" height="30"><circle cx="14.85" cy="14.9" r="10.8" fill="#00ae42" stroke="#fff" stroke-width="2"/><path d="M9 14.9h11.7M14.85 9v11.8" stroke="#fff" stroke-width="1.1"/></svg>
<svg class="a" style="left:1855px;top:983px" width="30" height="30"><circle cx="14.85" cy="14.9" r="10.8" fill="#00ae42" stroke="#fff" stroke-width="2"/></svg>
<div class="a" style="left:1806px;top:176px;width:43px;height:34px;background:#fff;border-radius:2px"></div>
<svg class="a" style="left:1848px;top:200px" width="10" height="10"><path d="M0 3L1 3L8 10H0z" fill="#fff"/></svg>
<div class="a" style="left:1806px;top:178px;width:43px;text-align:center;font-size:12.5px;line-height:15px;color:#00ae42">266<br>53.20</div>
<div class="a" style="left:1810px;top:998px;width:39px;height:34px;background:#fff;border-radius:2px"></div>
<svg class="a" style="left:1848px;top:997px" width="10" height="10"><path d="M0 1H9.5L1 8.5H0z" fill="#fff"/></svg>
<div class="a" style="left:1810px;top:1000.5px;width:39px;text-align:center;font-size:12.5px;line-height:15px;color:#00ae42">1<br>0.20</div>
<!-- horizontal slider -->
<div class="a" style="left:720.5px;top:1096px;width:832px;height:24px;border-radius:12px;background:#fff"></div>
<div class="a" style="left:727px;top:1102px;width:810px;height:12px;border-radius:6px;background:#00ae42"></div>
<svg class="a" style="left:1526px;top:1093px" width="30" height="30"><circle cx="15.5" cy="15" r="10.8" fill="#00ae42" stroke="#fff" stroke-width="2"/></svg>
<svg class="a" style="left:1555px;top:1100px" width="8" height="16"><path d="M1 8L7 2V14z" fill="#fff"/></svg>
<div class="a" style="left:1561px;top:1098px;width:25px;height:20px;background:#fff;border-radius:2px;text-align:center;font-size:12.5px;line-height:20px;color:#00ae42">45</div>
<svg class="a" style="left:1855px;top:1094px" width="30" height="28">
 <g fill="#00ae42" stroke="#fff" stroke-width="0.9" stroke-linejoin="round">
 <path d="M15 13l-10.5 4.8 10.5 5.4 10.5-5.4z"/><path d="M15 8.8l-10.5 4.9 10.5 5.2 10.5-5.2z"/><path d="M15 4.6l-10 5 10 5 10-5z"/></g>
</svg>
<svg class="a" style="left:1896px;top:1134px" width="8" height="8"><path d="M8 0V8H0C4 8 8 4 8 0z" fill="#1a1a1a"/></svg>
<div class="a" style="left:1321px;top:67px;width:459px;height:563px;background:rgba(0,0,0,0.70)"></div>
<div class="a" style="left:1321px;top:67px;width:459px;height:30px;background:rgba(0,0,0,0.33)"></div>
<svg class="a" style="left:1321px;top:67px" width="459" height="563" viewBox="1321 67 459 563"><path d="M1607 379L1622 369.5L1746 453L1738 457L1723 465Z" fill="#1c231f"/><path d="M1607 379L1723 465" stroke="#1a201c" stroke-width="2"/><path d="M1740 455L1780 486M1724 463L1780 505" stroke="#1a241e" stroke-width="5"/></svg>
<div class="t" style="left:1333px;top:72.5px;font-size:12.4px;font-weight:bold;color:#fff;">Slicing Result</div>
<svg class="a" style="left:1758px;top:72px" width="20" height="20"><path d="M4.5 10.5l5.5-5 5.5 5M4.5 15l5.5-5 5.5 5" fill="none" stroke="#fff" stroke-width="1.3"/></svg>
<div class="t" style="left:1333px;top:99.5px;font-size:12.4px;font-weight:bold;color:#fff;">Color Scheme</div>
<div class="a" style="left:1425px;top:102px;width:197px;height:21px;border-radius:3px;background:#2a2a2a"></div>
<svg class="a" style="left:1428px;top:104px" width="20" height="18"><path d="M3 7.5l5 3.5 5-3.5" fill="none" stroke="#e4e4e4" stroke-width="1.2"/></svg>
<div class="t" style="left:1450px;top:102px;font-size:13px;color:#e4e4e4;">Line Type</div>
<div class="t" style="left:1333px;top:124.5px;font-size:12.4px;font-weight:bold;color:#fff;">Line Type</div>
<div class="t" style="left:1459px;top:124.5px;font-size:12.4px;font-weight:bold;color:#fff;">Time</div>
<div class="t" style="left:1521px;top:124.5px;font-size:12.4px;font-weight:bold;color:#fff;">Percent</div>
<div class="t" style="left:1582px;top:124.5px;font-size:12.4px;font-weight:bold;color:#fff;">Used filament</div>
<div class="t" style="left:1703px;top:124.5px;font-size:12.4px;font-weight:bold;color:#fff;">Display</div>
<div class="a" style="left:1322px;top:146px;width:456px;height:1.5px;background:#b8b8b8"></div>
<div class="t" style="left:1351px;top:147.5px;font-size:13px;color:#e4e4e4;">Inner wall</div>
<div class="t" style="left:1459px;top:147.5px;font-size:13px;color:#e4e4e4;">5m55s</div>
<div class="t" style="left:1521px;top:147.5px;font-size:13px;color:#e4e4e4;">13.8%</div>
<div class="t" style="left:1582px;top:147.5px;font-size:13px;color:#e4e4e4;">1.52 m</div>
<div class="t" style="left:1630px;top:147.5px;font-size:13px;color:#e4e4e4;">4.62 g</div>
<div class="t" style="left:1351px;top:168.5px;font-size:13px;color:#e4e4e4;">Outer wall</div>
<div class="t" style="left:1459px;top:168.5px;font-size:13px;color:#e4e4e4;">7m25s</div>
<div class="t" style="left:1521px;top:168.5px;font-size:13px;color:#e4e4e4;">17.3%</div>
<div class="t" style="left:1582px;top:168.5px;font-size:13px;color:#e4e4e4;">1.42 m</div>
<div class="t" style="left:1630px;top:168.5px;font-size:13px;color:#e4e4e4;">4.31 g</div>
<div class="t" style="left:1351px;top:189.5px;font-size:13px;color:#e4e4e4;">Overhang wall</div>
<div class="t" style="left:1459px;top:189.5px;font-size:13px;color:#e4e4e4;">&lt;1s</div>
<div class="t" style="left:1521px;top:189.5px;font-size:13px;color:#e4e4e4;">&lt;0.1%</div>
<div class="t" style="left:1582px;top:189.5px;font-size:13px;color:#e4e4e4;">0.00 m</div>
<div class="t" style="left:1630px;top:189.5px;font-size:13px;color:#e4e4e4;">0.00 g</div>
<div class="t" style="left:1351px;top:210.5px;font-size:13px;color:#e4e4e4;">Sparse infill</div>
<div class="t" style="left:1459px;top:210.5px;font-size:13px;color:#e4e4e4;">11m36s</div>
<div class="t" style="left:1521px;top:210.5px;font-size:13px;color:#e4e4e4;">27.1%</div>
<div class="t" style="left:1582px;top:210.5px;font-size:13px;color:#e4e4e4;">2.04 m</div>
<div class="t" style="left:1630px;top:210.5px;font-size:13px;color:#e4e4e4;">6.17 g</div>
<div class="t" style="left:1351px;top:231.5px;font-size:13px;color:#e4e4e4;">Internal solid infill</div>
<div class="t" style="left:1459px;top:231.5px;font-size:13px;color:#e4e4e4;">2m30s</div>
<div class="t" style="left:1521px;top:231.5px;font-size:13px;color:#e4e4e4;">5.8%</div>
<div class="t" style="left:1582px;top:231.5px;font-size:13px;color:#e4e4e4;">0.43 m</div>
<div class="t" style="left:1630px;top:231.5px;font-size:13px;color:#e4e4e4;">1.29 g</div>
<div class="t" style="left:1351px;top:252.5px;font-size:13px;color:#e4e4e4;">Top surface</div>
<div class="t" style="left:1459px;top:252.5px;font-size:13px;color:#e4e4e4;">4s</div>
<div class="t" style="left:1521px;top:252.5px;font-size:13px;color:#e4e4e4;">0.2%</div>
<div class="t" style="left:1582px;top:252.5px;font-size:13px;color:#e4e4e4;">0.00 m</div>
<div class="t" style="left:1630px;top:252.5px;font-size:13px;color:#e4e4e4;">0.01 g</div>
<div class="t" style="left:1351px;top:273.5px;font-size:13px;color:#e4e4e4;">Bottom surface</div>
<div class="t" style="left:1459px;top:273.5px;font-size:13px;color:#e4e4e4;">&lt;1s</div>
<div class="t" style="left:1521px;top:273.5px;font-size:13px;color:#e4e4e4;">&lt;0.1%</div>
<div class="t" style="left:1582px;top:273.5px;font-size:13px;color:#e4e4e4;">0.00 m</div>
<div class="t" style="left:1630px;top:273.5px;font-size:13px;color:#e4e4e4;">0.00 g</div>
<div class="t" style="left:1351px;top:294.5px;font-size:13px;color:#e4e4e4;">Bridge</div>
<div class="t" style="left:1459px;top:294.5px;font-size:13px;color:#e4e4e4;">3s</div>
<div class="t" style="left:1521px;top:294.5px;font-size:13px;color:#e4e4e4;">0.1%</div>
<div class="t" style="left:1582px;top:294.5px;font-size:13px;color:#e4e4e4;">0.01 m</div>
<div class="t" style="left:1630px;top:294.5px;font-size:13px;color:#e4e4e4;">0.02 g</div>
<div class="t" style="left:1351px;top:315.5px;font-size:13px;color:#e4e4e4;">Gap infill</div>
<div class="t" style="left:1459px;top:315.5px;font-size:13px;color:#e4e4e4;">6s</div>
<div class="t" style="left:1521px;top:315.5px;font-size:13px;color:#e4e4e4;">0.2%</div>
<div class="t" style="left:1582px;top:315.5px;font-size:13px;color:#e4e4e4;">0.01 m</div>
<div class="t" style="left:1630px;top:315.5px;font-size:13px;color:#e4e4e4;">0.02 g</div>
<div class="t" style="left:1351px;top:336.5px;font-size:13px;color:#e4e4e4;">Brim</div>
<div class="t" style="left:1459px;top:336.5px;font-size:13px;color:#e4e4e4;">24s</div>
<div class="t" style="left:1521px;top:336.5px;font-size:13px;color:#e4e4e4;">1.0%</div>
<div class="t" style="left:1582px;top:336.5px;font-size:13px;color:#e4e4e4;">0.04 m</div>
<div class="t" style="left:1630px;top:336.5px;font-size:13px;color:#e4e4e4;">0.13 g</div>
<div class="t" style="left:1351px;top:357.5px;font-size:13px;color:#e4e4e4;">Custom</div>
<div class="t" style="left:1459px;top:357.5px;font-size:13px;color:#e4e4e4;">5m48s</div>
<div class="t" style="left:1521px;top:357.5px;font-size:13px;color:#e4e4e4;">13.5%</div>
<div class="t" style="left:1582px;top:357.5px;font-size:13px;color:#e4e4e4;">0.02 m</div>
<div class="t" style="left:1630px;top:357.5px;font-size:13px;color:#e4e4e4;">0.07 g</div>
<div class="t" style="left:1351px;top:378.5px;font-size:13px;color:#e4e4e4;">Travel</div>
<div class="t" style="left:1459px;top:378.5px;font-size:13px;color:#e4e4e4;">8m46s</div>
<div class="t" style="left:1521px;top:378.5px;font-size:13px;color:#e4e4e4;">20.5%</div>
<div class="t" style="left:1351px;top:399.5px;font-size:13px;color:#e4e4e4;">Retract</div>
<div class="t" style="left:1351px;top:420.5px;font-size:13px;color:#e4e4e4;">Unretract</div>
<div class="t" style="left:1351px;top:441.5px;font-size:13px;color:#e4e4e4;">Wipe</div>
<div class="t" style="left:1351px;top:462.5px;font-size:13px;color:#e4e4e4;">Seams</div>
<svg class="a" style="left:1321px;top:140px" width="459" height="350">
<rect x="13" y="13.0" width="9" height="9" fill="#ffe03c"/>
<rect x="386" y="10.5" width="15.5" height="14" fill="#595959"/>
<path d="M388.5 17.5l3.5 3.5 7-7" fill="none" stroke="#00c040" stroke-width="1.8"/>
<rect x="13" y="34.0" width="9" height="9" fill="#ff7d36"/>
<rect x="386" y="31.5" width="15.5" height="14" fill="#595959"/>
<path d="M388.5 38.5l3.5 3.5 7-7" fill="none" stroke="#00c040" stroke-width="1.8"/>
<rect x="13" y="55.0" width="9" height="9" fill="#1e1eff"/>
<rect x="386" y="52.5" width="15.5" height="14" fill="#595959"/>
<path d="M388.5 59.5l3.5 3.5 7-7" fill="none" stroke="#00c040" stroke-width="1.8"/>
<rect x="13" y="76.0" width="9" height="9" fill="#b0302b"/>
<rect x="386" y="73.5" width="15.5" height="14" fill="#595959"/>
<path d="M388.5 80.5l3.5 3.5 7-7" fill="none" stroke="#00c040" stroke-width="1.8"/>
<rect x="13" y="97.0" width="9" height="9" fill="#9a54d6"/>
<rect x="386" y="94.5" width="15.5" height="14" fill="#595959"/>
<path d="M388.5 101.5l3.5 3.5 7-7" fill="none" stroke="#00c040" stroke-width="1.8"/>
<rect x="13" y="118.0" width="9" height="9" fill="#f03c3c"/>
<rect x="386" y="115.5" width="15.5" height="14" fill="#595959"/>
<path d="M388.5 122.5l3.5 3.5 7-7" fill="none" stroke="#00c040" stroke-width="1.8"/>
<rect x="13" y="139.0" width="9" height="9" fill="#6a5ad2"/>
<rect x="386" y="136.5" width="15.5" height="14" fill="#595959"/>
<path d="M388.5 143.5l3.5 3.5 7-7" fill="none" stroke="#00c040" stroke-width="1.8"/>
<rect x="13" y="160.0" width="9" height="9" fill="#4a86c8"/>
<rect x="386" y="157.5" width="15.5" height="14" fill="#595959"/>
<path d="M388.5 164.5l3.5 3.5 7-7" fill="none" stroke="#00c040" stroke-width="1.8"/>
<rect x="13" y="181.0" width="9" height="9" fill="#ffffff"/>
<rect x="386" y="178.5" width="15.5" height="14" fill="#595959"/>
<path d="M388.5 185.5l3.5 3.5 7-7" fill="none" stroke="#00c040" stroke-width="1.8"/>
<rect x="13" y="202.0" width="9" height="9" fill="#0a3a7a"/>
<rect x="386" y="199.5" width="15.5" height="14" fill="#595959"/>
<path d="M388.5 206.5l3.5 3.5 7-7" fill="none" stroke="#00c040" stroke-width="1.8"/>
<rect x="13" y="223.0" width="9" height="9" fill="#5ad28c"/>
<rect x="386" y="220.5" width="15.5" height="14" fill="#595959"/>
<path d="M388.5 227.5l3.5 3.5 7-7" fill="none" stroke="#00c040" stroke-width="1.8"/>
<rect x="13" y="244.0" width="9" height="9" fill="#3a46a8"/>
<rect x="386" y="241.5" width="15.5" height="14" fill="#595959"/>
<rect x="13" y="265.0" width="9" height="9" fill="#d02cd0"/>
<rect x="386" y="262.5" width="15.5" height="14" fill="#595959"/>
<rect x="13" y="286.0" width="9" height="9" fill="#40acd6"/>
<rect x="386" y="283.5" width="15.5" height="14" fill="#595959"/>
<rect x="13" y="307.0" width="9" height="9" fill="#ffff00"/>
<rect x="386" y="304.5" width="15.5" height="14" fill="#595959"/>
<rect x="13" y="328.0" width="9" height="9" fill="#e4e4e4"/>
<rect x="386" y="325.5" width="15.5" height="14" fill="#595959"/>
<path d="M388.5 332.5l3.5 3.5 7-7" fill="none" stroke="#00c040" stroke-width="1.8"/>
</svg>
<div class="t" style="left:1333px;top:492.5px;font-size:12.4px;font-weight:bold;color:#fff;">Total Estimation</div>
<div class="a" style="left:1322px;top:513.5px;width:456px;height:1.5px;background:#b8b8b8"></div>
<div class="t" style="left:1333px;top:516px;font-size:13px;color:#e4e4e4;">Total Filament:</div>
<div class="t" style="left:1502px;top:516px;font-size:13px;color:#e4e4e4;">5.49 m</div>
<div class="t" style="left:1557.5px;top:516px;font-size:13px;color:#e4e4e4;">16.64 g</div>
<div class="t" style="left:1333px;top:535px;font-size:13px;color:#e4e4e4;">Model Filament:</div>
<div class="t" style="left:1502px;top:535px;font-size:13px;color:#e4e4e4;">5.49 m</div>
<div class="t" style="left:1557.5px;top:535px;font-size:13px;color:#e4e4e4;">16.64 g</div>
<div class="t" style="left:1333px;top:554px;font-size:13px;color:#e4e4e4;">Cost:</div>
<div class="t" style="left:1502px;top:554px;font-size:13px;color:#e4e4e4;">0.42</div>
<div class="t" style="left:1333px;top:573px;font-size:13px;color:#e4e4e4;">Prepare and timelapse time:</div>
<div class="t" style="left:1502px;top:573px;font-size:13px;color:#e4e4e4;">5m58s + 2m55s</div>
<div class="t" style="left:1333px;top:592px;font-size:13px;color:#e4e4e4;">Model printing time:</div>
<div class="t" style="left:1502px;top:592px;font-size:13px;color:#e4e4e4;">34m0s</div>
<div class="t" style="left:1333px;top:611px;font-size:13px;color:#e4e4e4;">Total time:</div>
<div class="t" style="left:1502px;top:611px;font-size:13px;color:#e4e4e4;">42m53s</div><div class="a" style="left:1405px;top:630px;width:375px;height:448px;background:#fff;border-radius:6px"></div>
<svg class="a" style="left:1405px;top:630px" width="375" height="447">
 <circle cx="34.5" cy="29.5" r="14.8" fill="none" stroke="#00ae42" stroke-width="2.2"/>
 <path d="M28.5 30.5l5 3.2 7.2-8.6" fill="none" stroke="#00ae42" stroke-width="2.6" stroke-linecap="round" stroke-linejoin="round"/>
 <circle cx="342" cy="29" r="13" fill="#ebebeb"/>
 <path d="M334.5 21.5l15 15M349.5 21.5l-15 15" stroke="#9a9a9a" stroke-width="1.2"/>
 <path d="M15 58.5h345" stroke="#e6e6e6" stroke-width="1"/>
 <circle cx="292.8" cy="416.5" r="15.5" fill="none" stroke="#262e30" stroke-width="1.6"/>
 <path d="M301 416.5h-16M291 410.5l-6 6 6 6" fill="none" stroke="#262e30" stroke-width="1.6"/>
 <circle cx="339" cy="416.5" r="15.5" fill="none" stroke="#262e30" stroke-width="1.6"/>
 <path d="M331 416.5h16M341 410.5l6 6-6 6" fill="none" stroke="#262e30" stroke-width="1.6"/>
 <path d="M68 420l5.5-5 5.5 5M68 424.5l5.5-5 5.5 5" fill="none" stroke="#9a9a9a" stroke-width="1.1"/>
</svg>
<div class="t" style="left:1462px;top:650px;font-size:12.6px;font-weight:bold;color:#262e30">Slice ok.</div>
<!-- illustration -->
<svg class="a" style="left:1420px;top:704px" width="345" height="182" viewBox="1420 704 345 182">
 <rect x="1420" y="704" width="345" height="182" fill="#ededed"/>
 <path d="M1503.6 741L1641.1 728.4L1648 850L1517 863Z" fill="#fbfbfb"/>
 <path d="M1647.5 787.3L1648.5 850L1580 848L1590 832Z" fill="#f0f0ee"/>
 <text x="1581" y="786" font-size="25" font-weight="bold" fill="#6a6a6a" text-anchor="middle" transform="rotate(-5 1581 786)" font-family="Liberation Sans" letter-spacing="1">Daily</text>
 <text x="1591" y="821" font-size="25" font-weight="bold" fill="#6a6a6a" text-anchor="middle" transform="rotate(-5 1591 821)" font-family="Liberation Sans" letter-spacing="1">Tips</text>
 <ellipse cx="1595" cy="867" rx="92" ry="5" fill="#cf9a85"/>
 <!-- left plants -->
 <path d="M1496 816c8-5 18 2 19 12s-2 12-5 13c-8-3-16-13-14-25z" fill="#7fb08a"/>
 <path d="M1510 838l3 25" stroke="#5a9a73" stroke-width="1.5"/>
 <path d="M1493 838c10-3 20 5 26 14l2 11h-16c-6-6-11-15-12-25z" fill="#5e9c76"/>
 <path d="M1556 846h20l5 5-8 2 8 8-25 2z" fill="#2a5e4e"/>
 <!-- dog -->
 <path d="M1519 812c2-10 10-15 20-15s20 6 22 15c2 12-1 25-2 35l2 21h-38c-4-15-6-40-4-56z" fill="#efefef"/>
 <path d="M1533 818c6-2 14-2 20 1 3 10 4 30 3 49h-20c-3-15-5-35-3-50z" fill="#fafafa"/>
 <path d="M1526.6 808l2.5-7 4.6 4.5zM1545.5 804.5l4.5-5.5 2 7z" fill="#f0b0a0"/>
 <circle cx="1537.5" cy="811" r="0.9" fill="#333"/><circle cx="1549" cy="811" r="0.9" fill="#333"/><circle cx="1547.5" cy="813.2" r="1.1" fill="#222"/>
 <path d="M1542.5 817c2 3 6 3 8.5 0-1 3-3 4.5-4.5 4.5s-3.5-1.5-4-4.5z" fill="#e88080"/>
 <!-- middle plants -->
 <path d="M1590 863c2-10 12-18 22-18 8 0 14 6 16 10l4-10c6 4 10 10 10 18z" fill="#5a9a73"/>
 <path d="M1596 845l6 6M1600 843l-2 8" stroke="#5a9a73" stroke-width="1.2"/>
 <path d="M1625 846l12-4 4 2-4 2z" fill="#c0c8c8"/>
 <!-- right plants -->
 <path d="M1668 863c0-15 6-30 14-35 6 3 9 10 9 18l-4 17z" fill="#5e9c76"/>
 <path d="M1675 863c2-6 8-10 15-10l11 2-6 8z" fill="#2e6a52"/>
 <path d="M1676 829c2-4 4-6 6-7" stroke="#6aa080" stroke-width="1" fill="none"/>
 <circle cx="1682.4" cy="821.3" r="6" fill="#c8dcd4"/>
 <!-- woman -->
 <path d="M1661 746c6-5 16-3 19 5 3 10 0 20 2 30l-2 9h-9c-2-10-3-22-4-30-2-5-7-8-6-14z" fill="#2b2540"/>
 <path d="M1659.5 752c1-5 6-7 9-5 1 5 0 11-3 14h-4c-2-3-2-6-2-9z" fill="#e8a888"/>
 <path d="M1636 744.5l2-1 6 9 15 13-4 5-13-12z" fill="#ee8560"/>
 <path d="M1649 764c6-3 16-2 22 1 2 10 1 22 0 30h-22c-2-10-2-20 0-31z" fill="#ee8560"/>
 <path d="M1644.5 771.5l2-1 6 9 4 8-4 2-6-8z" fill="#f09878"/>
 <path d="M1647 795h23c2 8 0 16-3 24l1 34h-7l-3-25-2 25h-7c-2-14-3-30-2-58z" fill="#4a5a94"/>
 <path d="M1653 853h7v3h-7zM1661 853h7v3h-7z" fill="#5a78b8"/>
 <path d="M1654 856h5v6h-5zM1662 856h5v6h-5z" fill="#e8a888"/>
 <path d="M1641 867c3-4 9-5 13-5l2 5zM1650 870c3-4 10-6 15-6l3 6z" fill="#fff"/>
</svg>
<div class="t" style="left:1420px;top:905px;font-size:13.3px;color:#1fb24e">Split to Objects/Parts</div>
<div class="t" style="left:1420px;top:920px;font-size:13.35px;color:#363c3e">Did you know that you can split a big object into small</div>
<div class="t" style="left:1420px;top:935px;font-size:13.35px;color:#363c3e">ones for easy colorizing or printing?</div>
<div class="t" style="left:1420px;top:950px;font-size:13.35px;color:#363c3e">For more information, please check out our <span style="color:#1e8ae6">Wiki</span></div>
<div class="t" style="left:1421px;top:1040px;font-size:13.2px;color:#9a9a9a">Collapse</div>
<div class="t" style="left:1638px;top:1039px;font-size:13.3px;color:#262e30">11/27</div>
</body></html>
